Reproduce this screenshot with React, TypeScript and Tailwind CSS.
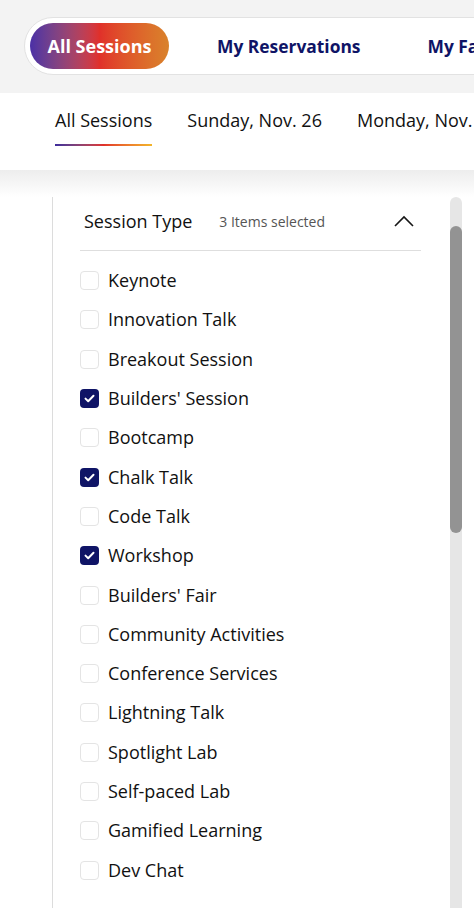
const FONT = "font-['Open_Sans',sans-serif]";

const sessionTypes = [
  { label: 'Keynote', checked: false },
  { label: 'Innovation Talk', checked: false },
  { label: 'Breakout Session', checked: false },
  { label: "Builders' Session", checked: true },
  { label: 'Bootcamp', checked: false },
  { label: 'Chalk Talk', checked: true },
  { label: 'Code Talk', checked: false },
  { label: 'Workshop', checked: true },
  { label: "Builders' Fair", checked: false },
  { label: 'Community Activities', checked: false },
  { label: 'Conference Services', checked: false },
  { label: 'Lightning Talk', checked: false },
  { label: 'Spotlight Lab', checked: false },
  { label: 'Self-paced Lab', checked: false },
  { label: 'Gamified Learning', checked: false },
  { label: 'Dev Chat', checked: false },
];

function Checkbox({ checked }: { checked: boolean }) {
  if (checked) {
    return (
      <span className="flex h-[19px] w-[19px] shrink-0 items-center justify-center rounded-[4px] bg-[#0f1466]">
        <svg width="11" height="9" viewBox="0 0 11 9" fill="none">
          <path d="M1.5 4.6L4.2 7.2L9.5 1.8" stroke="white" strokeWidth="2" strokeLinecap="round" strokeLinejoin="round" />
        </svg>
      </span>
    );
  }
  return <span className="h-[19px] w-[19px] shrink-0 rounded-[4px] border border-[#e4e4e4] bg-white" />;
}

export default function App() {
  return (
    <div className={`h-[908px] w-[474px] overflow-hidden bg-white ${FONT}`}>
      {/* top nav */}
      <div className="h-[93px] overflow-hidden bg-[#f3f3f3] pl-[24px] pt-[17px]">
        <div className="inline-flex h-[58px] items-center whitespace-nowrap rounded-full border border-[#e2e2e2] bg-white pl-[5px] pr-[40px]">
          <span className="flex h-[46px] w-[139px] items-center justify-center rounded-full bg-gradient-to-r from-[#4b2fa6] via-[#e0302a] to-[#d9822b] text-[18px] font-bold text-white">
            All Sessions
          </span>
          <span className="ml-[48px] text-[17.4px] font-bold text-[#0f1466]">My Reservations</span>
          <span className="ml-[67px] text-[17.4px] font-bold text-[#0f1466]">My Favorites</span>
        </div>
      </div>

      {/* date tabs */}
      <div className="flex h-[77px] gap-[35px] overflow-hidden whitespace-nowrap bg-white pl-[55px] pt-[14px] text-[18px] text-[#111111]">
        <div className="flex flex-col">
          <span className="leading-[26px]">All Sessions</span>
          <span className="mt-[11px] h-[2px] w-full bg-gradient-to-r from-[#3d2a9c] via-[#e0302a] to-[#f2b52a]" />
        </div>
        <span className="leading-[26px]">Sunday, Nov. 26</span>
        <span className="leading-[26px]">Monday, Nov. 27</span>
      </div>

      <div className="h-[27px] bg-gradient-to-b from-[#ededed] to-white" />

      {/* filter panel */}
      <div className="flex">
        <div className="ml-[52px] flex-1 border-l border-[#dcdcdc] pl-[27px] pr-[29px]">
          <div className="flex h-[54px] items-center border-b border-[#dedede] pb-[5px] pl-[4px]">
            <span className="text-[18px] text-[#111111]">Session Type</span>
            <span className="ml-[27px] text-[14px] text-[#555555]">3 Items selected</span>
            <svg className="ml-auto mr-[7px]" width="20" height="12" viewBox="0 0 20 12" fill="none">
              <path d="M1 11L10 2L19 11" stroke="#161616" strokeWidth="1.6" />
            </svg>
          </div>
          <div className="pt-[10px]">
            {sessionTypes.map((item) => (
              <div key={item.label} className="flex h-[39.3px] items-center gap-[9px]">
                <Checkbox checked={item.checked} />
                <span className="text-[18px] text-[#111111]">{item.label}</span>
              </div>
            ))}
          </div>
        </div>
        {/* scrollbar */}
        <div className="mr-[12px] flex h-[712px] w-[12px] flex-col rounded-t-full bg-[#e6e6e6] pt-[29px]">
          <div className="h-[307px] w-[12px] rounded-full bg-[#939393]" />
        </div>
      </div>
    </div>
  );
}
